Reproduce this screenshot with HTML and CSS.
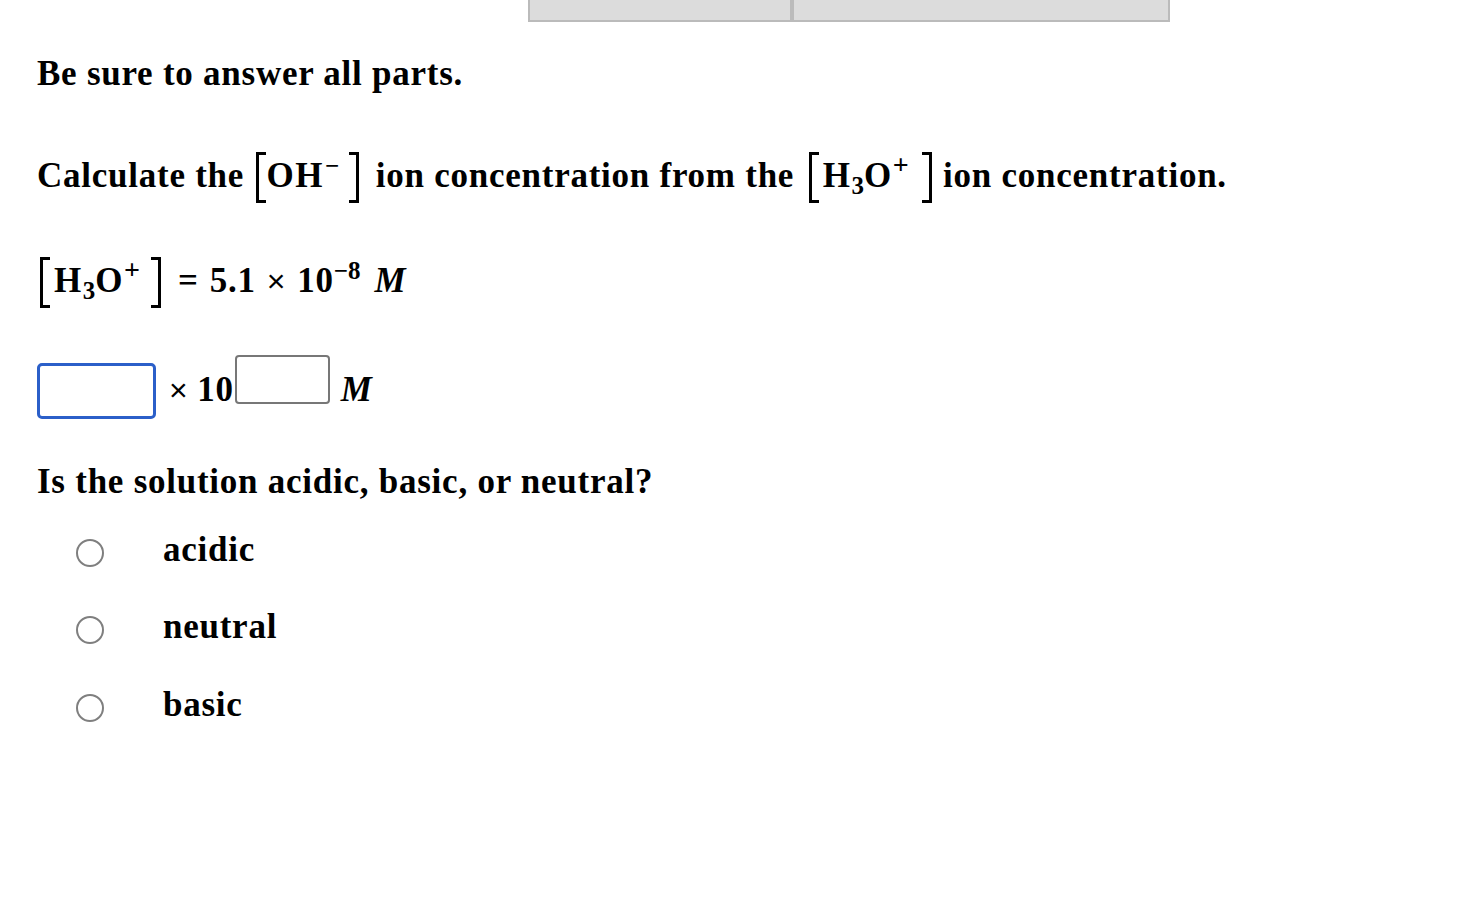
FILE: index.html
```html
<!DOCTYPE html>
<html>
<head>
<meta charset="utf-8">
<link rel="stylesheet" href="styles.css">
</head>
<body>
<div class="tabs">
  <div class="tab tab-a"></div>
  <div class="tab tab-b"></div>
</div>
<div class="content">
  <p class="line intro">Be sure to answer all parts.</p>
  <p class="line calc">Calculate the <span class="grp grp-oh"><span class="br br-l"></span><span class="chem">OH<sup class="minus">−</sup></span><span class="br br-r"></span></span> ion concentration from the <span class="grp grp-h3o"><span class="br br-l"></span><span class="chem">H<sub>3</sub>O<sup>+</sup></span><span class="br br-r"></span></span> ion concentration.</p>
  <p class="line given"><span class="grp grp-h3o grp-first"><span class="br br-l"></span><span class="chem">H<sub>3</sub>O<sup>+</sup></span><span class="br br-r"></span></span><span class="op-eq">=</span>5.1<span class="times op-x">×</span>10<sup class="exp">−8</sup><i class="unit-m">M</i></p>
  <div class="answer">
    <span class="box box-main"></span>
    <span class="txt x10"><span class="times">×</span> 10</span><span class="box box-exp"></span>
    <i class="txt unit">M</i>
  </div>
  <p class="line question">Is the solution acidic, basic, or neutral?</p>
  <ul class="options">
    <li class="opt"><span class="radio"></span><span class="label">acidic</span></li>
    <li class="opt"><span class="radio"></span><span class="label">neutral</span></li>
    <li class="opt"><span class="radio"></span><span class="label">basic</span></li>
  </ul>
</div>
</body>
</html>
```
FILE: styles.css
```css
html, body {
  margin: 0;
  padding: 0;
  background: #fff;
}
body {
  font-family: "Liberation Serif", "Times New Roman", serif;
  font-weight: bold;
  color: #000;
  width: 1466px;
  height: 912px;
  overflow: hidden;
  font-size: 35px;
  letter-spacing: 0.75px;
}
.tabs {
  display: flex;
  margin-left: 528px;
  width: 642px;
  height: 22px;
}
.tab {
  background: #dcdcdc;
  border: 2px solid #bbbbbb;
  border-top: none;
  box-sizing: border-box;
  height: 22px;
}
.tab-a { width: 264px; }
.tab-b { width: 378px; }
.content {
  padding-left: 37px;
}
.line {
  margin: 0;
  line-height: 40px;
  white-space: nowrap;
}
.intro { margin-top: 32px; }
.calc { margin-top: 58px; }
.given { margin-top: 54px; }
.question { margin-top: 43px; }
.br {
  display: inline-block;
  width: 10px;
  height: 51px;
  border: 3px solid #000;
  box-sizing: border-box;
  vertical-align: -16px;
}
.br-l { border-right: none; margin-right: 3px; }
.br-r { border-left: none; }
.grp-oh .br-l { margin-left: 2px; margin-right: 1px; }
.grp-oh .br-r { margin-left: 10px; margin-right: 7px; }
.grp-h3o .br-l { margin-left: 5px; margin-right: 4px; }
.grp-h3o .br-r { margin-left: 13px; margin-right: 2px; }
.grp-first .br-l { margin-left: 3px; }
.grp-first .br-r { margin-left: 11px; }
.chem {
  letter-spacing: 1.5px;
}
.chem sup, .chem sub, .exp {
  font-size: 25px;
  line-height: 0;
  letter-spacing: 0;
}
.chem sup {
  font-size: 28px;
  vertical-align: 13px;
}
.chem sub { vertical-align: -7px; }
.chem .minus { margin-left: 1px; font-size: 25px; }
.exp { vertical-align: 13px; }
.times {
  font-family: "Liberation Sans", Arial, sans-serif;
  font-weight: normal;
  font-size: 32px;
  letter-spacing: 0;
}
.op-eq {
  margin-left: 15px;
  margin-right: 11px;
}
.op-x {
  margin: 0 12px 0 11px;
}
.unit-m {
  margin-left: 14px;
}
.answer {
  display: flex;
  align-items: flex-start;
  margin-top: 55px;
  height: 56px;
}
.box {
  display: block;
  box-sizing: border-box;
  flex: none;
}
.box-main {
  width: 119px;
  height: 56px;
  border: 3px solid #2b5fc9;
  border-radius: 5px;
}
.txt {
  line-height: 40px;
  margin-top: 7px;
  white-space: nowrap;
}
.x10 {
  margin-left: 13px;
}
.box-exp {
  width: 95px;
  height: 49px;
  border: 2px solid #777;
  border-radius: 4px;
  margin-top: -8px;
  margin-left: 1px;
}
.unit {
  margin-left: 11px;
}
.options {
  list-style: none;
  margin: 12px 0 0 0;
  padding: 0 0 0 39px;
}
.opt {
  display: flex;
  align-items: center;
  height: 77.5px;
}
.radio {
  width: 28px;
  height: 28px;
  border: 2px solid #7f7f7f;
  border-radius: 50%;
  box-sizing: border-box;
  flex: none;
}
.label {
  margin-left: 59px;
  margin-top: -6px;
  line-height: 40px;
}
```
